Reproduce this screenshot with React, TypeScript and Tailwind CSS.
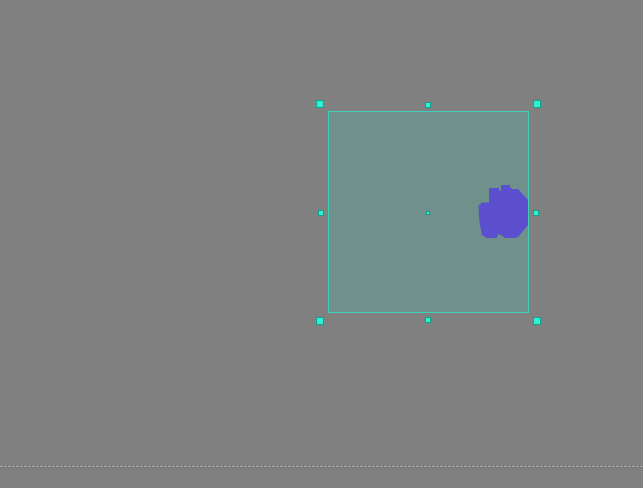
import React from "react";

const Handle = ({ x, y, s }: { x: number; y: number; s: number }) => (
  <div
    className="absolute border border-[#12a18e] bg-[#2ef0d2]"
    style={{ left: x - s / 2, top: y - s / 2, width: s, height: s }}
  />
);

export default function App() {
  return (
    <div className="relative flex h-[488px] w-[643px] flex-col overflow-hidden bg-[#808080]">
      <div className="relative h-[466px] w-full">
        {/* selection rectangle */}
        <div className="absolute left-[328px] top-[111px] h-[202px] w-[201px] border border-[#3fcfb6] bg-[#70918b]" />
        {/* blob */}
        <svg className="absolute left-0 top-0" width={643} height={466}>
          <polygon
            fill="#5b4fd0"
            points="489,188 499,188 499.5,191 501,191 501,185 510,185 510,187 512,189 518,189 528,200 528,225 519,236 516,238 505,238 501,235 498,234 497,238 487,238 482,235 480,225 479,218 478.5,205 481,204 481,202.5 489,202.5"
          />
        </svg>
        {/* handles */}
        <Handle x={320} y={104} s={8} />
        <Handle x={537} y={104} s={8} />
        <Handle x={320} y={321} s={8} />
        <Handle x={537} y={321} s={8} />
        <Handle x={428} y={105} s={6} />
        <Handle x={321} y={213} s={6} />
        <Handle x={536} y={213} s={6} />
        <Handle x={428} y={320} s={6} />
        <Handle x={428} y={213} s={4} />
      </div>
      {/* dashed baseline */}
      <div className="h-px w-full bg-[repeating-linear-gradient(to_right,#ababab_0px,#ababab_3px,#6c6c6c_3px,#6c6c6c_4px)]" />
      <div className="h-px w-full bg-[repeating-linear-gradient(to_right,#737373_0px,#737373_3px,#808080_3px,#808080_4px)]" />
    </div>
  );
}
